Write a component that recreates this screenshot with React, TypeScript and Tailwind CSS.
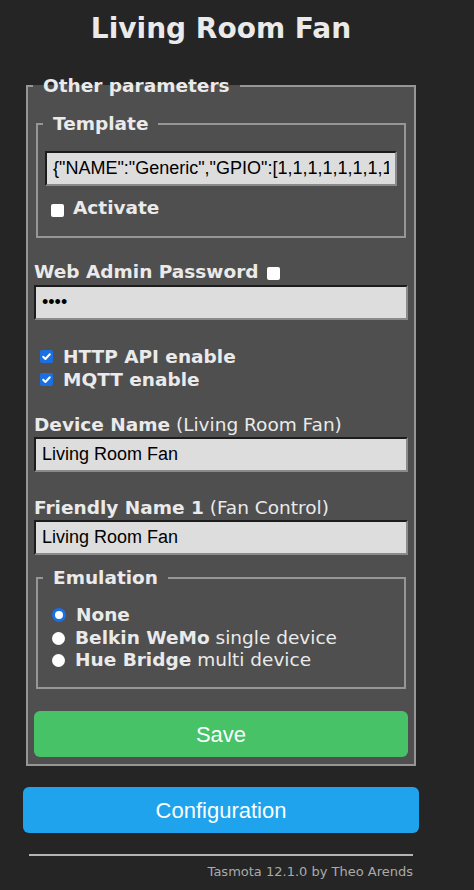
import type { ReactNode } from "react";

const sans = "font-['DejaVu_Sans',Verdana,sans-serif]";
const arial = "font-['Liberation_Sans',Arial,sans-serif]";

function Check({ on = false, className = "" }: { on?: boolean; className?: string }) {
  if (!on) {
    return <span className={`inline-block h-[13px] w-[13px] shrink-0 rounded-[2px] bg-white ${className}`} />;
  }
  return (
    <span className={`inline-flex h-[13px] w-[13px] shrink-0 items-center justify-center rounded-[2px] bg-[#1a6fe3] ${className}`}>
      <svg viewBox="0 0 13 13" className="h-[13px] w-[13px]">
        <path d="M3.2 6.8l2.2 2.2 4.4-4.8" fill="none" stroke="#fff" strokeWidth="2" strokeLinecap="round" strokeLinejoin="round" />
      </svg>
    </span>
  );
}

function Radio({ on = false }: { on?: boolean }) {
  return on ? (
    <span className="mt-[4px] inline-block h-[14px] w-[14px] shrink-0 rounded-full border-[3px] border-[#1a6fe3] bg-white" />
  ) : (
    <span className="mt-[5px] inline-block h-[13px] w-[13px] shrink-0 rounded-full bg-white" />
  );
}

function Field({ value, type = "text", className = "" }: { value: string; type?: string; className?: string }) {
  return (
    <input
      type={type}
      readOnly
      defaultValue={value}
      className={`block h-[35px] w-full border-2 border-t-[#1c1c1c] border-l-[#1c1c1c] border-r-[#8a8a8a] border-b-[#8a8a8a] bg-[#dddddd] px-[6px] text-[18px] text-black outline-none ${arial} ${className}`}
    />
  );
}

function Group({ title, className = "", children }: { title: string; className?: string; children: ReactNode }) {
  return (
    <fieldset className={`mx-[2px] min-w-0 border-2 border-[#969696] bg-[#4f4f4f] px-[7px] ${className}`}>
      <legend className="-ml-[2px] px-[10px] text-[18.5px] font-bold leading-[22px]">{title}</legend>
      {children}
    </fieldset>
  );
}

export default function App() {
  return (
    <div className={`min-h-[890px] bg-[#252525] text-[#eaeaea] ${sans}`}>
      <div className="ml-[23px] w-[396px]">
        <h2 className="pt-[12px] text-center text-[28px] font-bold leading-[34px]">Living Room Fan</h2>

        <fieldset className="mx-[3px] mt-[29px] min-w-0 border-2 border-[#969696] bg-[#4f4f4f] px-[6px] pb-[7px]">
          <legend className="-ml-[1px] px-[10px] text-[18.5px] font-bold leading-[22px]">Other parameters</legend>

          <Group title="Template" className="mt-[16px] pb-[17px]">
            <Field value={'{"NAME":"Generic","GPIO":[1,1,1,1,1,1,1,1,1,1,1,1,1,1],"FLAG":0,"BASE":18}'} className="mt-[16px]" />
            <label className="mt-[11px] flex items-start gap-[9px] pl-[6px] text-[18.5px] font-bold leading-[22px]">
              <Check className="mt-[7px]" />
              Activate
            </label>
          </Group>

          <div className="mt-[23px] flex items-start gap-[8px] text-[18.5px] font-bold leading-[22px]">
            Web Admin Password
            <Check className="mt-[6px]" />
          </div>
          <Field type="password" value="1234" className="mt-[2px]" />

          <div className="mt-[25px] pl-[6px] text-[18.5px] font-bold leading-[23px]">
            <label className="flex items-start gap-[10px]">
              <Check on className="mt-[5px]" />
              HTTP API enable
            </label>
            <label className="flex items-start gap-[10px]">
              <Check on className="mt-[5px]" />
              MQTT enable
            </label>
          </div>

          <div className="mt-[23px] text-[18.5px] leading-[22px]">
            <b>Device Name</b> (Living Room Fan)
          </div>
          <Field value="Living Room Fan" className="mt-[1px]" />

          <div className="mt-[25px] text-[18.5px] leading-[22px]">
            <b>Friendly Name 1</b> (Fan Control)
          </div>
          <Field value="Living Room Fan" className="mt-[1px]" />

          <Group title="Emulation" className="mt-[12px] pb-[15.5px]">
            <div className="mt-[15px] pl-[7px] text-[18.5px] leading-[22.5px]">
              <label className="flex items-start gap-[10px]">
                <Radio on />
                <b>None</b>
              </label>
              <label className="flex items-start gap-[10px]">
                <Radio />
                <span>
                  <b>Belkin WeMo</b> single device
                </span>
              </label>
              <label className="flex items-start gap-[10px]">
                <Radio />
                <span>
                  <b>Hue Bridge</b> multi device
                </span>
              </label>
            </div>
          </Group>

          <button
            type="button"
            className={`mt-[22px] flex h-[46px] w-full items-center justify-center rounded-[6px] bg-[#47c266] text-[22px] text-[#faffff] ${arial}`}
          >
            Save
          </button>
        </fieldset>

        <button
          type="button"
          className={`mt-[21px] flex h-[46px] w-full items-center justify-center rounded-[6px] bg-[#1fa3ec] text-[22px] text-[#faffff] ${arial}`}
        >
          Configuration
        </button>

        <div className="mx-[6px] mt-[21px] h-[2px] bg-[#b4b4b4]" />
        <div className="mt-[8px] pr-[6px] text-right text-[13px] leading-[16px] text-[#aaaaaa]">
          Tasmota 12.1.0 by Theo Arends
        </div>
      </div>
    </div>
  );
}
